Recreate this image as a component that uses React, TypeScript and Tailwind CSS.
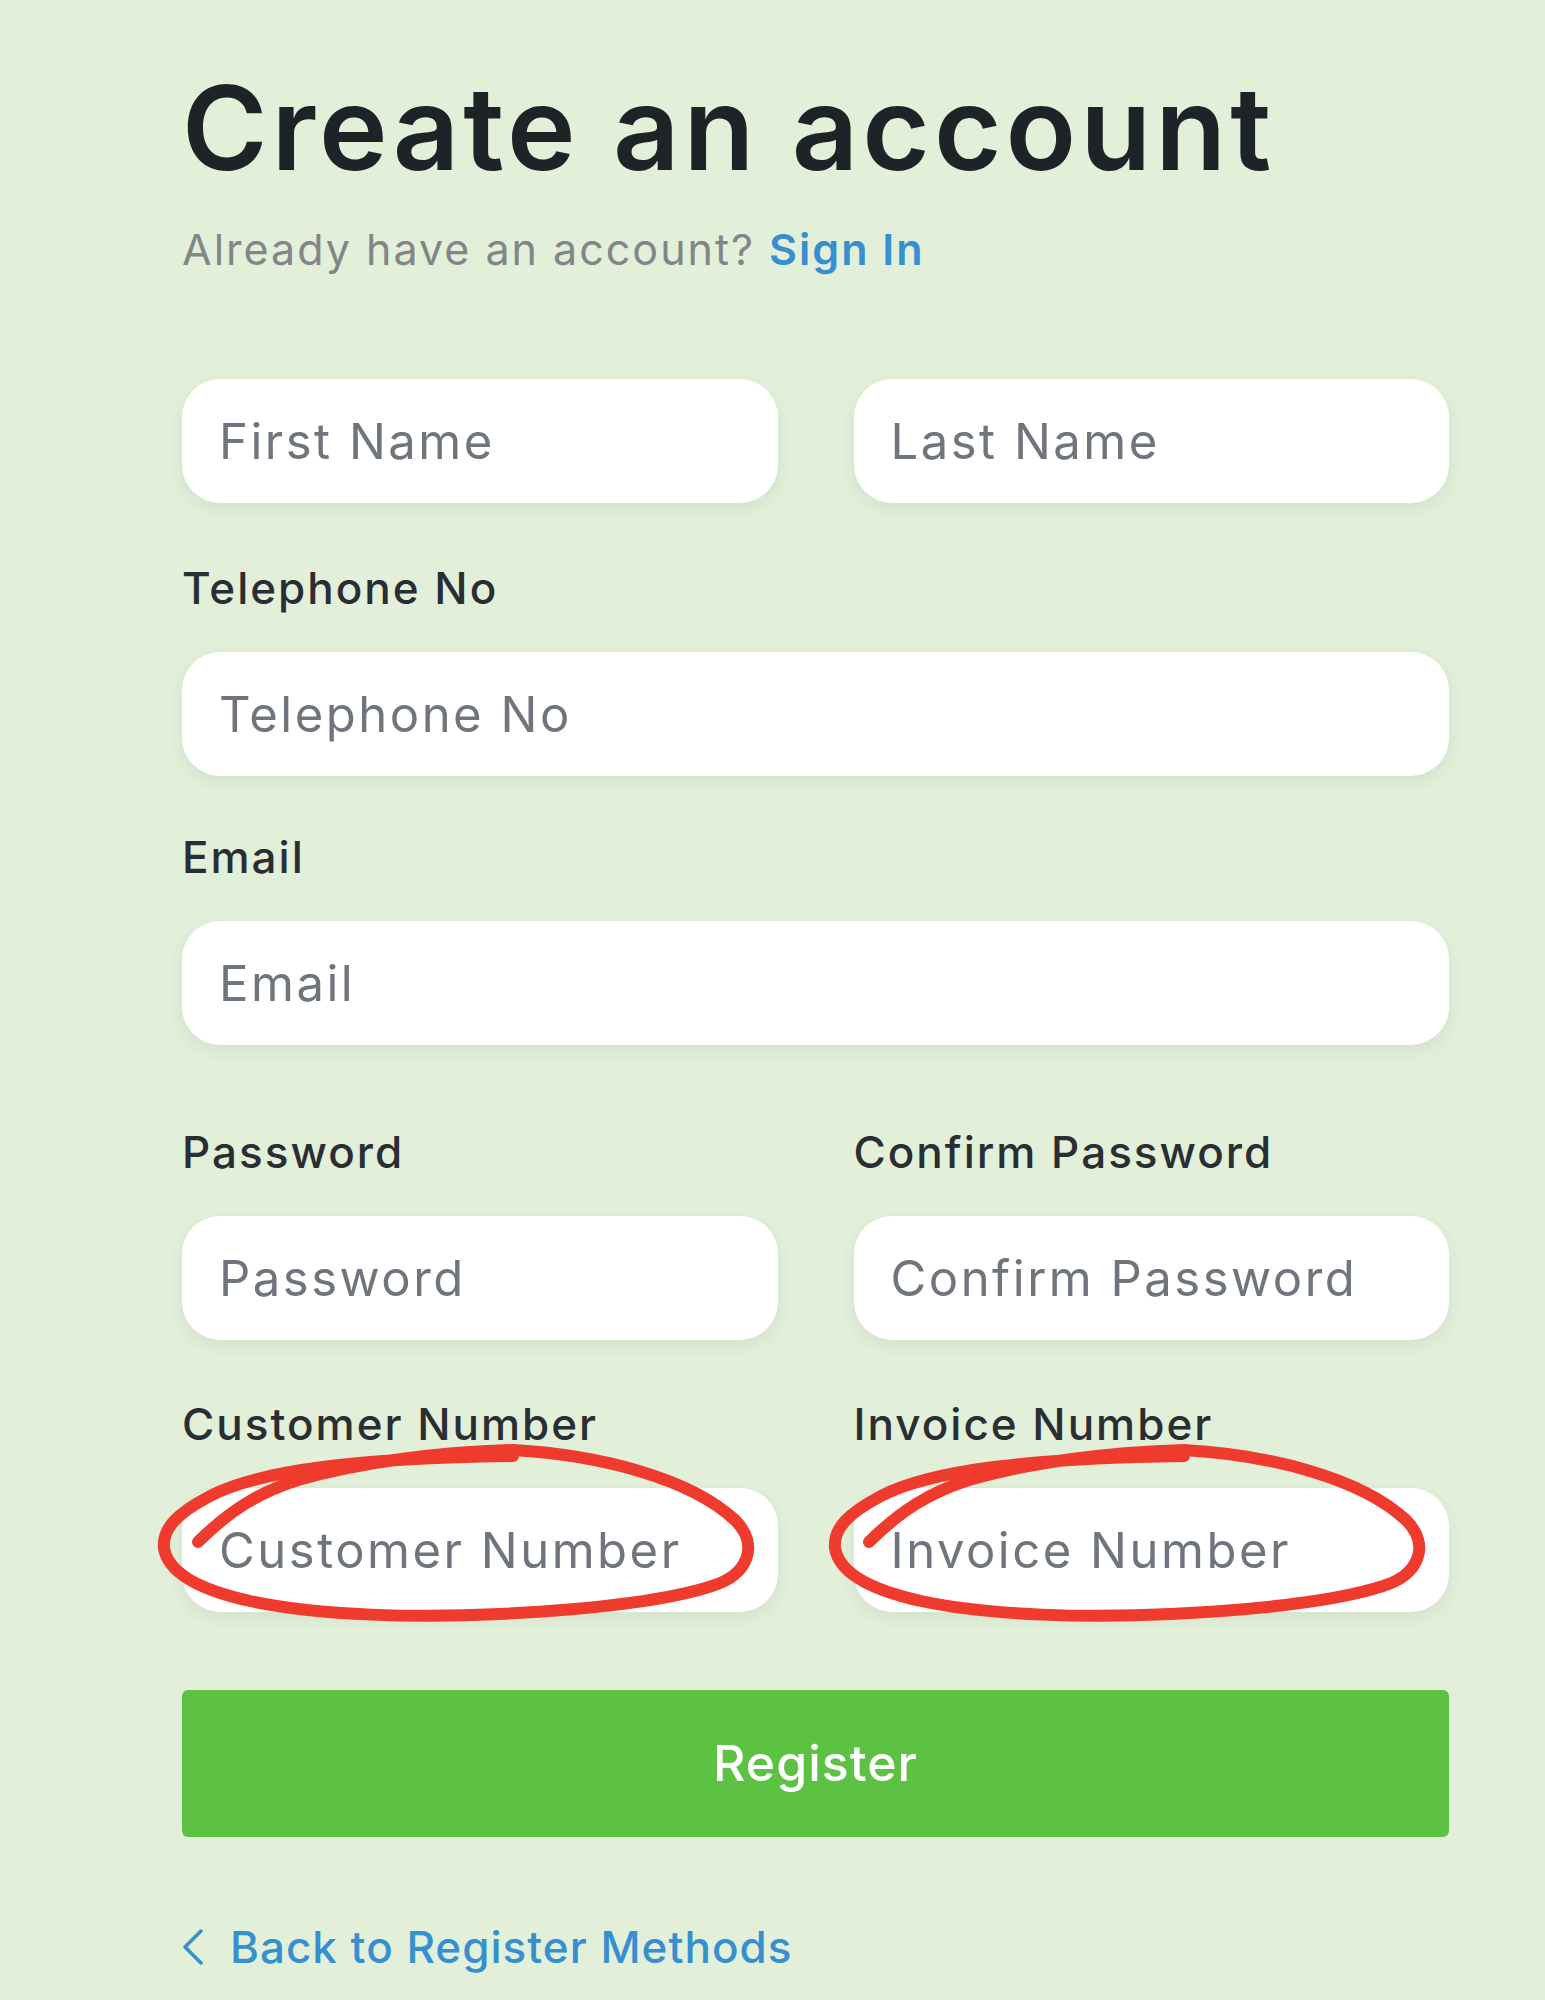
import { useState } from "react";

const font = { fontFamily: "Inter, 'Noto Sans', sans-serif" };

function Field({ label, placeholder }: { label?: string; placeholder: string }) {
  const [value, setValue] = useState("");
  return (
    <div>
      {label && (
        <label className="block text-[44px] leading-[56px] font-medium tracking-[2px] text-[#2a2e32]">{label}</label>
      )}
      <input
        type="text"
        value={value}
        onChange={(e) => setValue(e.target.value)}
        placeholder={placeholder}
        className={
          "block w-full h-[124px] rounded-[38px] bg-white pl-[37px] pr-6 text-[49px] tracking-[2.5px] text-[#3b3f44] placeholder:text-[#6f757c] outline-none shadow-[0_6px_16px_rgba(60,80,50,0.08)] " +
          (label ? "mt-[36px]" : "")
        }
        style={font}
      />
    </div>
  );
}

// the red hand-drawn loops on top of the two last inputs
function Scribble({ dx }: { dx: number }) {
  return (
    <g transform={`translate(${dx} 0)`}>
      <path
        d="M198 1542 C 230 1510, 260 1492, 298 1480 C 360 1462, 440 1452, 513 1450 C 600 1455, 690 1478, 735 1520 C 760 1545, 748 1575, 712 1586 C 660 1603, 580 1610, 500 1614 C 420 1618, 320 1616, 250 1601 C 200 1590, 168 1573, 164 1548 C 162 1528, 178 1513, 210 1496 C 260 1470, 360 1458, 513 1456"
        fill="none"
        stroke="#ef3a2e"
        strokeWidth="12"
        strokeLinecap="round"
      />
    </g>
  );
}

export default function App() {
  return (
    <div className="relative min-h-[2000px] bg-[#e2efd9]" style={font}>
      <div className="pl-[182px] pr-[96px] pt-[70px]">
        <h1 className="text-[116px] leading-none font-semibold tracking-[4px] text-[#1e2327]">Create an account</h1>
        <p className="mt-[42px] text-[43px] leading-[42px] tracking-[2px] text-[#838588]">
          Already have an account? <a className="font-semibold text-[#3690d0]">Sign In</a>
        </p>

        <div className="mt-[109px] grid grid-cols-2 gap-x-[76px]">
          <Field placeholder="First Name" />
          <Field placeholder="Last Name" />
        </div>

        <div className="mt-[57px]">
          <Field label="Telephone No" placeholder="Telephone No" />
        </div>

        <div className="mt-[53px]">
          <Field label="Email" placeholder="Email" />
        </div>

        <div className="mt-[79px] grid grid-cols-2 gap-x-[76px]">
          <Field label="Password" placeholder="Password" />
          <Field label="Confirm Password" placeholder="Confirm Password" />
        </div>

        <div className="mt-[56px] grid grid-cols-2 gap-x-[76px]">
          <Field label="Customer Number" placeholder="Customer Number" />
          <Field label="Invoice Number" placeholder="Invoice Number" />
        </div>

        <button className="mt-[78px] block w-full h-[147px] rounded-[6px] bg-[#5dc243] text-[50px] font-medium tracking-[1px] text-white">
          Register
        </button>

        <a className="mt-[82px] flex items-center gap-[26px] text-[44px] leading-[56px] font-medium tracking-[1px] text-[#3690d0]">
          <svg width="22" height="36" viewBox="0 0 22 36" fill="none">
            <path d="M19 2 L3 18 L19 34" stroke="#3690d0" strokeWidth="3.5" strokeLinecap="round" strokeLinejoin="round" />
          </svg>
          Back to Register Methods
        </a>
      </div>

      <svg className="pointer-events-none absolute left-0 top-0" width="1545" height="2000">
        <Scribble dx={0} />
        <Scribble dx={671} />
      </svg>
    </div>
  );
}
